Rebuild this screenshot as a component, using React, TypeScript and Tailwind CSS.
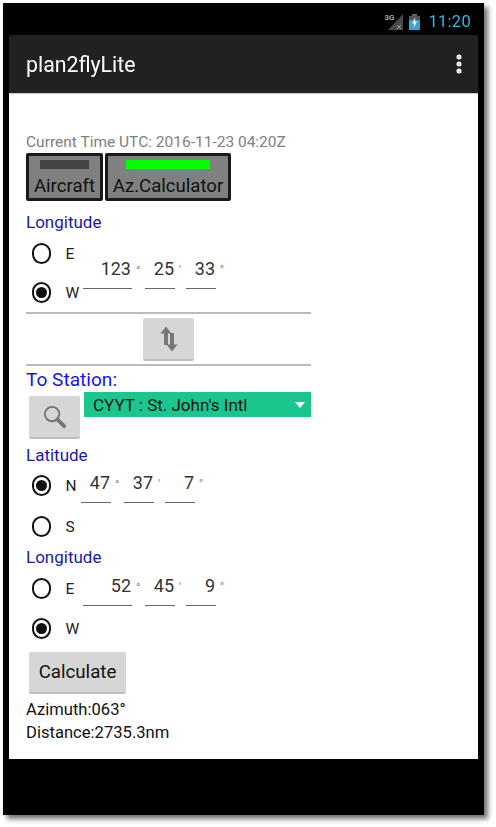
import { MoreVertical } from "lucide-react";

const Radio = ({ checked, label }: { checked?: boolean; label: string }) => (
  <div className="flex h-[30px] items-center pl-[6px]">
    <span className="flex h-[21px] w-[21px] items-center justify-center rounded-full border-[2.5px] border-[#111]">
      {checked ? <span className="h-[11px] w-[11px] rounded-full bg-[#111]" /> : null}
    </span>
    <span className="ml-[15px] w-[18px] pt-[3px] text-[15.5px] text-[#222]">{label}</span>
  </div>
);

const Field = ({ value, unit, width, gap }: { value: string; unit: string; width: string; gap: string }) => (
  <div className="flex items-start">
    <div className={`h-[38px] border-b-[1.5px] border-[#666] pr-[1px] pt-[7px] text-right text-[18px] leading-[22px] text-[#333] ${width}`}>
      {value}
    </div>
    <span className={`mt-[13px] pl-[4px] text-[12px] leading-[14px] text-[#888] ${gap}`}>{unit}</span>
  </div>
);

const CoordBlock = ({
  title,
  first,
  second,
  firstChecked,
  wide,
  values,
  radiosClass,
  fieldsClass,
}: {
  title: string;
  first: string;
  second: string;
  firstChecked?: boolean;
  wide?: boolean;
  values: [string, string, string];
  radiosClass: string;
  fieldsClass: string;
}) => (
  <div>
    <div className="h-[24px] text-[17px] leading-[24px] text-[#1a1aa6]">{title}</div>
    <div className="flex">
      <div className={`flex w-[55px] flex-col ${radiosClass}`}>
        <Radio checked={firstChecked} label={first} />
        <Radio checked={!firstChecked} label={second} />
      </div>
      <div className={`flex items-start ${fieldsClass}`}>
        <Field value={values[0]} unit="°" width={wide ? "w-[49px]" : "w-[30px]"} gap="w-[13px]" />
        <Field value={values[1]} unit="'" width="w-[30px]" gap="w-[11px]" />
        <Field value={values[2]} unit={'"'} width="w-[30px]" gap="w-[11px]" />
      </div>
    </div>
  </div>
);

const ToggleButton = ({ label, lamp, width }: { label: string; lamp: string; width: string }) => (
  <div className={`flex h-[48px] flex-col items-center rounded-[2px] border-[3px] border-[#1a1a1a] bg-[#808080] ${width}`}>
    <div className={`mt-[4px] h-[9px] shrink-0 ${lamp}`} />
    <div className="mt-[5px] whitespace-nowrap text-[18.6px] leading-[24px] text-[#111]">{label}</div>
  </div>
);

export default function App() {
  return (
    <div className="h-[827px] w-[496px] overflow-hidden bg-white pl-[3px] pt-[3px] font-['Roboto',sans-serif]">
      <div className="flex h-[812px] w-[481px] flex-col bg-black shadow-[4px_4px_5px_rgba(0,0,0,0.55)] blur-[0.4px]">
        {/* status bar */}
        <div className="flex h-[32px] shrink-0 items-center justify-end pr-[13px] pt-[5px]">
          <div className="relative mr-[6px] h-[16px] w-[15px]">
            <svg viewBox="0 0 15 16" className="h-[16px] w-[15px]">
              <path d="M15 0v16H0z" fill="#4a4a4a" />
              <path d="M9 11l4 4M13 11l-4 4" stroke="#999" strokeWidth="1" />
            </svg>
            <span className="absolute -left-[4px] -top-[1px] text-[8px] font-bold leading-[10px] text-[#aaa]">3G</span>
          </div>
          <svg viewBox="0 0 11 16" className="mr-[8px] h-[16px] w-[11px]">
            <rect x="3" y="0" width="5" height="2" fill="#666" />
            <rect x="0" y="2" width="11" height="14" fill="#33a5d6" />
            <rect x="0" y="2" width="11" height="4" fill="#555" />
            <path d="M6.5 3L3 9.5h2.3L4.5 14 8 7.5H5.7z" fill="#fff" />
          </svg>
          <span className="mt-[1px] text-[16.5px] leading-[20px] tracking-[0.3px] text-[#33b5e5]">11:20</span>
        </div>

        <div className="mx-[6px] flex min-h-0 flex-1 flex-col">
          {/* app bar */}
          <div className="flex h-[58px] shrink-0 items-center justify-between bg-[#212121] pl-[17px] pr-[7px]">
            <span className="pt-[2px] text-[21.3px] text-white">plan2flyLite</span>
            <MoreVertical className="h-[24px] w-[24px] text-white" strokeWidth={3} />
          </div>

          {/* content */}
          <div className="h-[666px] shrink-0 border-t border-[#ccc] bg-white pl-[17px]">
            <div className="w-[285px]">
              <div className="mt-[38px] h-[21px] whitespace-nowrap text-[15.5px] leading-[20px] text-[#808080]">
                Current Time UTC: 2016-11-23 04:20Z
              </div>
              <div className="flex gap-[2px]">
                <ToggleButton label="Aircraft" lamp="w-[49px] bg-[#444]" width="w-[77px]" />
                <ToggleButton label="Az.Calculator" lamp="w-[84px] bg-[#00ff00]" width="w-[126px]" />
              </div>

              <div className="mb-[5px] mt-[9px]">
                <CoordBlock
                  title="Longitude"
                  first="E"
                  second="W"
                  wide
                  values={["123", "25", "33"]}
                  radiosClass="gap-[9px] pt-[4px]"
                  fieldsClass="ml-[2px] mt-[17px]"
                />
              </div>

              <div className="h-[2px] bg-[#bbb]" />
              <div className="flex h-[50px] items-start justify-center pt-[4px]">
                <div className="flex h-[43px] w-[51px] items-center justify-center rounded-[2px] border-b-[2px] border-[#bdbdbd] bg-[#d6d6d6]">
                  <svg viewBox="0 0 20 28" className="h-[28px] w-[20px]" fill="#777">
                    <path d="M7 1.5L12.5 8.5H9v11.5H5V8.5H1.5z" />
                    <path d="M11 8h4v11.5h3.5L13 26.5l-5.5-7H11z" />
                  </svg>
                </div>
              </div>
              <div className="h-[2px] bg-[#bbb]" />

              <div className="h-[26px] text-[19.1px] leading-[28px] text-[#1414ee]">To Station:</div>
              <div className="flex items-start">
                <div className="ml-[3px] mt-[4px] flex h-[43px] w-[51px] items-center justify-center rounded-[2px] border-b-[2px] border-[#bdbdbd] bg-[#d6d6d6]">
                  <svg viewBox="0 0 26 26" className="h-[25px] w-[25px]" fill="none" stroke="#777">
                    <circle cx="10.5" cy="10.5" r="7.5" strokeWidth="2" />
                    <path d="M16 16l7 7" strokeWidth="4" strokeLinecap="round" />
                  </svg>
                </div>
                <div className="relative ml-[4px] h-[25px] flex-1 bg-[#1bc68e] pl-[9px] text-[17px] leading-[26px] text-[#111]">
                  CYYT : St. John's Intl
                  <span className="absolute right-[6px] top-[10px] h-0 w-0 border-x-[5px] border-t-[6px] border-x-transparent border-t-white" />
                </div>
              </div>

              <div className="mb-[4px] mt-[4px]">
                <CoordBlock
                  title="Latitude"
                  first="N"
                  second="S"
                  firstChecked
                  values={["47", "37", "7"]}
                  radiosClass="gap-[11px] pt-[3px]"
                  fieldsClass="-mt-[2px]"
                />
              </div>
              <CoordBlock
                title="Longitude"
                first="E"
                second="W"
                wide
                values={["52", "45", "9"]}
                radiosClass="gap-[10px] pt-[4px]"
                fieldsClass="-mt-[1px] ml-[2px]"
              />

              <div className="ml-[3px] mt-[9px] flex h-[42px] w-[97px] items-center justify-center rounded-[2px] border-b-[2px] border-[#bdbdbd] bg-[#d6d6d6] pt-[1px] text-[18.7px] text-[#111]">
                Calculate
              </div>
              <div className="mt-[4px] text-[16.6px] leading-[23px] text-[#111]">
                <div>Azimuth:063°</div>
                <div>Distance:2735.3nm</div>
              </div>
            </div>
          </div>
        </div>
      </div>
    </div>
  );
}
